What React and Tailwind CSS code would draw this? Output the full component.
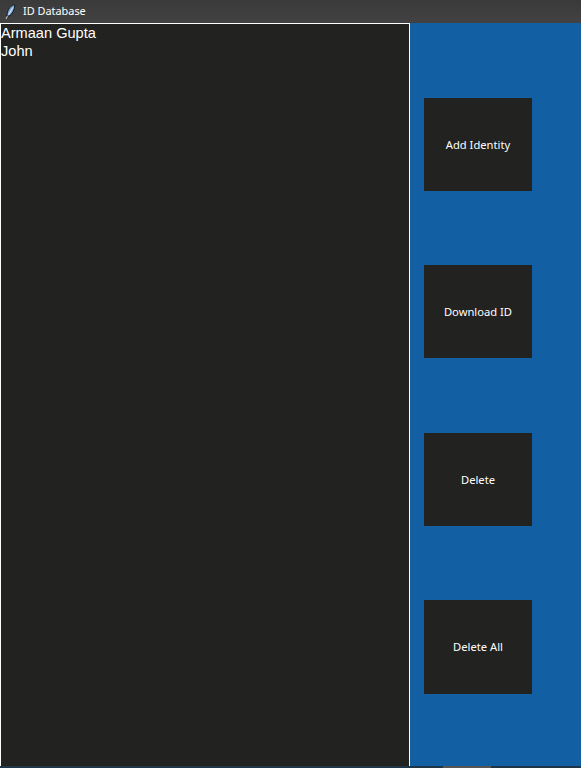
export default function App() {
  const btn = "flex w-[108px] shrink-0 items-center justify-center bg-[#222220] pt-px text-[11.2px] text-white";
  return (
    <div className="flex h-[768px] w-[581px] flex-col overflow-hidden bg-[#1f3548] font-['Noto_Sans','Open_Sans',sans-serif]">
      <div className="flex h-[23px] shrink-0 items-center bg-gradient-to-b from-[#3a3a3a] to-[#424242] pl-[5px]">
        <svg width="11" height="16" viewBox="0 0 11 16" className="shrink-0">
          <path d="M9.8 0.6C6 1.4 3 5 2.2 9.5L1.9 12.5L4 12C7.5 10 9.6 6 9.8 0.6Z" fill="#7fa8dc" stroke="#0d1420" strokeWidth="0.9" />
          <path d="M7.8 3.5L3.6 11" stroke="#eef5ff" strokeWidth="0.9" />
          <path d="M2.4 12L1 15" stroke="#dfe8f5" strokeWidth="0.9" />
        </svg>
        <span className="ml-[7px] text-[10.9px] leading-none text-white">ID Database</span>
      </div>
      <div className="flex min-h-0 flex-1">
        <div className="h-full w-[410px] shrink-0 border-l border-r border-t border-white bg-[#222220] font-['Liberation_Sans',Arial,sans-serif] text-[14.6px] leading-[18px] text-white">
          <div>Armaan Gupta</div>
          <div>John</div>
        </div>
        <div className="flex flex-1 flex-col bg-[#1260a3] pl-[14px] pt-[75px]">
          <button className={`${btn} h-[93px]`}>Add Identity</button>
          <button className={`${btn} mt-[74px] h-[93px]`}>Download ID</button>
          <button className={`${btn} mt-[75px] h-[93px]`}>Delete</button>
          <button className={`${btn} mt-[74px] h-[94px]`}>Delete All</button>
        </div>
      </div>
      <div className="flex h-[2px] shrink-0 bg-[#1f3548]">
        <div className="ml-[443px] h-full w-[48px] bg-[#555555]" />
      </div>
    </div>
  );
}
